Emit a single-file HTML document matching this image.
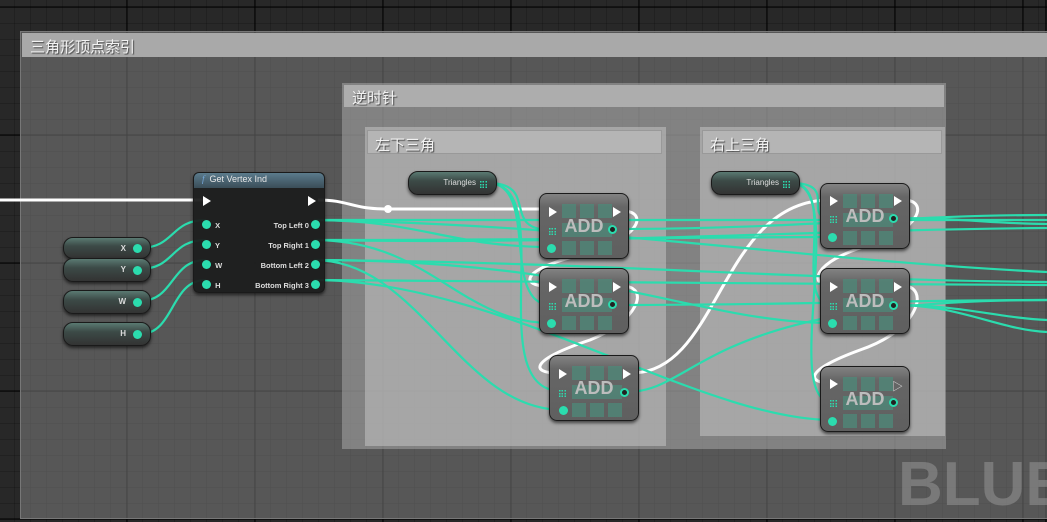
<!DOCTYPE html>
<html><head><meta charset="utf-8"><style>
*{margin:0;padding:0;box-sizing:border-box}
html,body{width:1047px;height:522px;overflow:hidden}
body{position:relative;background:#282828;font-family:"Liberation Sans","Noto Sans CJK SC",sans-serif}
.grid{position:absolute;inset:0;background:
 repeating-linear-gradient(90deg,rgba(0,0,0,.5) 0 2px,transparent 2px 128px),
 repeating-linear-gradient(0deg,rgba(0,0,0,.5) 0 2px,transparent 2px 128px),
 repeating-linear-gradient(90deg,rgba(0,0,0,.18) 0 1px,transparent 1px 16px),
 repeating-linear-gradient(0deg,rgba(0,0,0,.18) 0 1px,transparent 1px 16px);background-position:-2px -2px}
.box{position:absolute}
.hdr{position:absolute;left:2px;right:2px;top:2px;height:24px;color:#f2f2f2;font-size:15px;padding:3px 8px;text-shadow:1px 1px 1px #444}
.node{position:absolute;border-radius:8px;border:1px solid #1a1a1a;box-shadow:0 2px 3px rgba(0,0,0,.6)}
.var{background:linear-gradient(180deg,#5a7a72 0%,#3c4a47 40%,#333 100%);border-radius:10px;height:22px;width:88px;color:#ddd;font-size:8px;font-weight:bold;text-align:right;padding:6px 24px 0 0}
.pin{position:absolute;width:9px;height:9px;border-radius:50%;background:#2bdcae}
.add{width:90px;height:66px;background:linear-gradient(180deg,#828282,#666 20%,#5f5f5f);border-radius:8px}
.sq{position:absolute;width:14px;height:14px;background:#4d8a7a;opacity:.75}
.addt{position:absolute;left:0;right:0;top:22px;text-align:center;color:#bdbdbd;font-weight:bold;font-size:18px}
.exec{position:absolute;width:0;height:0;border-top:5px solid transparent;border-bottom:5px solid transparent;border-left:8px solid #fff}
.arr{position:absolute;width:7px;height:7px;background:repeating-linear-gradient(90deg,#2bdcae 0 1.5px,transparent 1.5px 2.7px);-webkit-mask:repeating-linear-gradient(0deg,#000 0 1.5px,transparent 1.5px 2.7px)}
.res{position:absolute;width:9px;height:9px;border-radius:50%;background:#222;border:2px solid #2bdcae}
</style></head><body>
<div class="grid"></div>
<div class="box" style="left:20px;top:31px;width:1027px;height:488px;background:rgba(125,125,125,.55);border:1px solid #777;border-right:none"></div>
<div class="box" style="left:22px;top:33px;width:1025px;height:24px;background:#a9a9a9"></div>
<div class="hdr" style="left:22px;top:33px;width:300px">三角形顶点索引</div>
<div class="box" style="left:342px;top:83px;width:604px;height:366px;background:rgba(165,165,165,.55)"></div>
<div class="box" style="left:344px;top:85px;width:600px;height:22px;background:#adadad"></div>
<div class="hdr" style="left:344px;top:84px;width:200px">逆时针</div>
<div class="box" style="left:365px;top:127px;width:301px;height:319px;background:rgba(190,190,190,.6)"></div>
<div class="box" style="left:367px;top:130px;width:295px;height:24px;background:#b5b5b5;border:1px solid #999"></div>
<div class="hdr" style="left:367px;top:131px;width:200px">左下三角</div>
<div class="box" style="left:700px;top:127px;width:245px;height:309px;background:rgba(190,190,190,.6)"></div>
<div class="box" style="left:702px;top:130px;width:240px;height:24px;background:#b5b5b5;border:1px solid #999"></div>
<div class="hdr" style="left:702px;top:131px;width:200px">右上三角</div>
<div style="position:absolute;left:898px;top:455px;width:149px;height:60px;overflow:hidden"><div style="font-size:62px;line-height:60px;font-weight:bold;color:rgba(150,150,150,.55);white-space:nowrap">BLUEP</div></div>

<svg style="position:absolute;left:0;top:0" width="1047" height="522">
<g fill="none" stroke="#fff" stroke-width="3">
<path d="M0 200 H205"/>
<path d="M318 200 C350 200,350 209,388 209 H548"/>
<path d="M622 211 C650 211,640 240,580 255 C520 270,520 286,548 286"/>
<path d="M622 286 C650 286,640 320,590 340 C530 360,530 373,558 373"/>
<path d="M632 373 C720 373,720 200,830 200"/>
<path d="M903 200 C930 200,920 230,870 245 C810 262,810 286,830 286"/>
<path d="M903 286 C930 286,920 330,860 350 C800 372,810 383,830 383"/>
</g>
<circle cx="388" cy="209" r="4" fill="#fff"/>
<g fill="none" stroke="#2bdcae" stroke-width="2.2">
<path d="M140 248 C175 248,170 220,206 220"/>
<path d="M140 269 C175 269,170 240,206 240"/>
<path d="M140 301 C175 301,170 260,206 260"/>
<path d="M140 334 C175 334,170 280,206 280"/>
<path d="M488 183 C540 183,500 230,551 230"/>
<path d="M488 183 C540 183,500 305,551 305"/>
<path d="M488 183 C560 183,480 391,561 391"/>
<path d="M791 183 C840 183,800 218,832 218"/>
<path d="M791 183 C840 183,790 305,832 305"/>
<path d="M791 183 C850 183,780 402,832 402"/>
<path d="M314 220 C420 220,450 247,551 247"/>
<path d="M314 240 C430 240,460 323,551 323"/>
<path d="M314 260 C420 260,460 410,563 410"/>
<path d="M314 220 H1047"/>
<path d="M314 240 C600 240,700 237,832 237"/>
<path d="M314 240 C600 245,800 230,1047 228"/>
<path d="M314 260 C600 260,700 323,832 323"/>
<path d="M314 260 C600 262,800 280,1047 282"/>
<path d="M314 280 C500 280,700 420,832 420"/>
<path d="M314 280 C600 280,800 285,1047 285"/>
<path d="M314 220 C600 225,800 260,1047 272"/>
<path d="M614 229 C800 229,900 215,1047 215"/>
<path d="M614 305 C800 305,900 300,1047 300"/>
<path d="M626 392 C700 392,700 300,1047 300"/>
<path d="M896 218 C960 218,1000 224,1047 224"/>
<path d="M896 305 C960 305,1000 318,1047 320"/>
<path d="M896 305 C960 305,1000 330,1047 332"/>
</g>
</svg>

<div class="node" style="left:193px;top:172px;width:132px;height:121px;background:rgba(28,30,30,.95);border-radius:6px">
 <div style="height:15px;background:linear-gradient(180deg,#5b7b8c,#3a4d58);border-radius:5px 5px 0 0;color:#e6e6e6;font-size:9px;padding:1px 0 0 8px"><i style="color:#7ad;font-family:'Liberation Serif'">f</i>&nbsp; Get Vertex Ind</div>
 <div class="exec" style="left:9px;top:23px"></div>
 <div class="exec" style="left:114px;top:23px"></div>
 <div style="position:absolute;left:8px;top:43px;color:#ddd;font-size:7.5px;font-weight:bold;line-height:20px;width:118px">
  <div><span class="pin" style="position:relative;display:inline-block;top:1px"></span>&nbsp; X<span style="float:right">Top Left 0 <span class="pin" style="position:relative;display:inline-block;top:1px"></span></span></div>
  <div><span class="pin" style="position:relative;display:inline-block;top:1px"></span>&nbsp; Y<span style="float:right">Top Right 1 <span class="pin" style="position:relative;display:inline-block;top:1px"></span></span></div>
  <div><span class="pin" style="position:relative;display:inline-block;top:1px"></span>&nbsp; W<span style="float:right">Bottom Left 2 <span class="pin" style="position:relative;display:inline-block;top:1px"></span></span></div>
  <div><span class="pin" style="position:relative;display:inline-block;top:1px"></span>&nbsp; H<span style="float:right">Bottom Right 3 <span class="pin" style="position:relative;display:inline-block;top:1px"></span></span></div>
 </div>
</div>

<div class="node var" style="left:63px;top:237px">X<span class="pin" style="right:8px;top:6px"></span></div>
<div class="node var" style="left:63px;top:258px;height:24px">Y<span class="pin" style="right:8px;top:7px"></span></div>
<div class="node var" style="left:63px;top:290px;height:24px">W<span class="pin" style="right:8px;top:7px"></span></div>
<div class="node var" style="left:63px;top:322px;height:24px">H<span class="pin" style="right:8px;top:7px"></span></div>
<div class="node var" style="left:408px;top:171px;height:24px;width:89px;padding-right:20px;font-weight:normal;font-size:8px">Triangles<span class="arr" style="right:9px;top:9px"></span></div>
<div class="node var" style="left:711px;top:171px;height:24px;width:89px;padding-right:20px;font-weight:normal;font-size:8px">Triangles<span class="arr" style="right:9px;top:9px"></span></div>

<div class="node add" style="left:539px;top:193px"><i class="sq" style="left:22px;top:10px"></i><i class="sq" style="left:40px;top:10px"></i><i class="sq" style="left:58px;top:10px"></i><i class="sq" style="left:22px;top:29px;width:50px"></i><i class="sq" style="left:22px;top:47px"></i><i class="sq" style="left:40px;top:47px"></i><i class="sq" style="left:58px;top:47px"></i><div class="addt">ADD</div><div class="exec" style="left:9px;top:13px"></div><div class="exec" style="left:73px;top:13px"></div><span class="arr" style="left:9px;top:34px"></span><span class="pin" style="left:7px;top:50px"></span><span class="res" style="left:68px;top:31px"></span></div>
<div class="node add" style="left:539px;top:268px"><i class="sq" style="left:22px;top:10px"></i><i class="sq" style="left:40px;top:10px"></i><i class="sq" style="left:58px;top:10px"></i><i class="sq" style="left:22px;top:29px;width:50px"></i><i class="sq" style="left:22px;top:47px"></i><i class="sq" style="left:40px;top:47px"></i><i class="sq" style="left:58px;top:47px"></i><div class="addt">ADD</div><div class="exec" style="left:9px;top:13px"></div><div class="exec" style="left:73px;top:13px"></div><span class="arr" style="left:9px;top:34px"></span><span class="pin" style="left:7px;top:50px"></span><span class="res" style="left:68px;top:31px"></span></div>
<div class="node add" style="left:549px;top:355px"><i class="sq" style="left:22px;top:10px"></i><i class="sq" style="left:40px;top:10px"></i><i class="sq" style="left:58px;top:10px"></i><i class="sq" style="left:22px;top:29px;width:50px"></i><i class="sq" style="left:22px;top:47px"></i><i class="sq" style="left:40px;top:47px"></i><i class="sq" style="left:58px;top:47px"></i><div class="addt">ADD</div><div class="exec" style="left:9px;top:13px"></div><div class="exec" style="left:73px;top:13px"></div><span class="arr" style="left:9px;top:34px"></span><span class="pin" style="left:9px;top:50px"></span><span class="res" style="left:70px;top:32px"></span></div>
<div class="node add" style="left:820px;top:183px"><i class="sq" style="left:22px;top:10px"></i><i class="sq" style="left:40px;top:10px"></i><i class="sq" style="left:58px;top:10px"></i><i class="sq" style="left:22px;top:29px;width:50px"></i><i class="sq" style="left:22px;top:47px"></i><i class="sq" style="left:40px;top:47px"></i><i class="sq" style="left:58px;top:47px"></i><div class="addt">ADD</div><div class="exec" style="left:9px;top:12px"></div><div class="exec" style="left:73px;top:12px"></div><span class="arr" style="left:9px;top:32px"></span><span class="pin" style="left:7px;top:49px"></span><span class="res" style="left:68px;top:30px"></span></div>
<div class="node add" style="left:820px;top:268px"><i class="sq" style="left:22px;top:10px"></i><i class="sq" style="left:40px;top:10px"></i><i class="sq" style="left:58px;top:10px"></i><i class="sq" style="left:22px;top:29px;width:50px"></i><i class="sq" style="left:22px;top:47px"></i><i class="sq" style="left:40px;top:47px"></i><i class="sq" style="left:58px;top:47px"></i><div class="addt">ADD</div><div class="exec" style="left:9px;top:13px"></div><div class="exec" style="left:73px;top:13px"></div><span class="arr" style="left:9px;top:34px"></span><span class="pin" style="left:7px;top:50px"></span><span class="res" style="left:68px;top:32px"></span></div>
<div class="node add" style="left:820px;top:366px"><i class="sq" style="left:22px;top:10px"></i><i class="sq" style="left:40px;top:10px"></i><i class="sq" style="left:58px;top:10px"></i><i class="sq" style="left:22px;top:29px;width:50px"></i><i class="sq" style="left:22px;top:47px"></i><i class="sq" style="left:40px;top:47px"></i><i class="sq" style="left:58px;top:47px"></i><div class="addt">ADD</div><div class="exec" style="left:9px;top:12px"></div><div style="position:absolute;left:71px;top:11px;color:#ddd;font-size:11px">▷</div><span class="arr" style="left:9px;top:33px"></span><span class="pin" style="left:7px;top:50px"></span><span class="res" style="left:68px;top:31px"></span></div>
</body></html>
